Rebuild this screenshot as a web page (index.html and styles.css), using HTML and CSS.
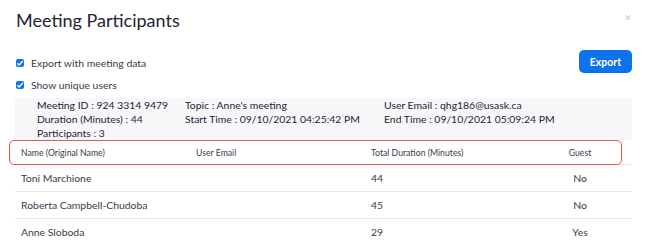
FILE: index.html
```html
<!DOCTYPE html>
<html>
<head>
<meta charset="utf-8">
<link rel="stylesheet" href="styles.css">
</head>
<body>
<div class="dialog">
  <div class="titlebar">
    <h1 class="title">Meeting Participants</h1>
    <span class="close">&#x2715;</span>
  </div>
  <div class="options">
    <div class="checks">
      <label class="check"><span class="box"><svg viewBox="0 0 8 8" width="8" height="8"><path d="M1.3 4.2 L3.2 6 L6.8 2" fill="none" stroke="#fff" stroke-width="1.4"/></svg></span>Export with meeting data</label>
      <label class="check"><span class="box"><svg viewBox="0 0 8 8" width="8" height="8"><path d="M1.3 4.2 L3.2 6 L6.8 2" fill="none" stroke="#fff" stroke-width="1.4"/></svg></span>Show unique users</label>
    </div>
    <button class="export">Export</button>
  </div>
  <div class="info">
    <div class="info-col c1">
      <div>Meeting ID : 924 3314 9479</div>
      <div>Duration (Minutes) : 44</div>
      <div>Participants : 3</div>
    </div>
    <div class="info-col c2">
      <div>Topic : Anne's meeting</div>
      <div>Start Time : 09/10/2021 04:25:42 PM</div>
    </div>
    <div class="info-col c3">
      <div>User Email : qhg186@usask.ca</div>
      <div>End Time : 09/10/2021 05:09:24 PM</div>
    </div>
  </div>
  <div class="table">
    <div class="row head">
      <div class="cell name">Name (Original Name)</div>
      <div class="cell email">User Email</div>
      <div class="cell dur">Total Duration (Minutes)</div>
      <div class="cell guest">Guest</div>
      <div class="highlight"></div>
    </div>
    <div class="row">
      <div class="cell name">Toni Marchione</div>
      <div class="cell email"></div>
      <div class="cell dur">44</div>
      <div class="cell guest">No</div>
    </div>
    <div class="row">
      <div class="cell name">Roberta Campbell-Chudoba</div>
      <div class="cell email"></div>
      <div class="cell dur">45</div>
      <div class="cell guest">No</div>
    </div>
    <div class="row">
      <div class="cell name">Anne Sloboda</div>
      <div class="cell email"></div>
      <div class="cell dur">29</div>
      <div class="cell guest">Yes</div>
    </div>
  </div>
</div>
</body>
</html>
```
FILE: styles.css
```css
html, body {
  margin: 0;
  padding: 0;
  background: #ffffff;
}
body {
  font-family: Lato, "Open Sans", sans-serif;
  color: #232333;
  width: 648px;
  height: 247px;
  overflow: hidden;
}
.dialog {
  padding: 0 16px 0 15px;
}
.titlebar {
  display: flex;
  justify-content: space-between;
  align-items: flex-start;
  height: 44px;
}
.title {
  margin: 9px 0 0 1px;
  font-size: 18px;
  font-weight: 400;
  color: #232333;
  line-height: 22px;
}
.close {
  margin-top: 12px;
  margin-right: 0;
  font-size: 9px;
  color: #c8c8c8;
}
.options {
  display: flex;
  justify-content: space-between;
  align-items: flex-start;
  height: 54px;
}
.checks {
  display: flex;
  flex-direction: column;
  gap: 8px;
  padding-top: 12px;
}
.check {
  display: flex;
  align-items: center;
  font-size: 10.4px;
  color: #3a3a48;
  line-height: 14px;
}
.box {
  width: 8px;
  height: 8px;
  background: #0e72ed;
  border-radius: 2px;
  margin: 0 7px 0 1px;
  display: flex;
  align-items: center;
  justify-content: center;
}
.box svg { display: block; }
.export {
  margin-top: 6px;
  width: 53px;
  height: 23px;
  background: #0e72ed;
  color: #fff;
  border: none;
  border-radius: 5px;
  font-family: Lato, sans-serif;
  font-weight: 700;
  font-size: 10.5px;
  padding: 0;
}
.info {
  display: flex;
  background: #f7f7fa;
  padding: 0 0 0 22px;
  height: 42px;
  font-size: 10.4px;
  line-height: 14px;
  color: #232333;
}
.info-col.c1 { width: 148px; }
.info-col.c2 { width: 199px; }
.table {
  display: flex;
  flex-direction: column;
}
.row {
  display: flex;
  height: 25px;
  align-items: center;
  padding-bottom: 1px;
  border-bottom: 1px solid #e8e8ea;
  font-size: 10.4px;
  color: #3a3a48;
  position: relative;
}
.row:last-child { border-bottom: none; }
.row.head {
  font-size: 8.7px;
  height: 24px;
  padding-bottom: 0;
}
.cell.name { width: 181px; padding-left: 6px; box-sizing: border-box; flex: none; }
.cell.email { width: 175px; flex: none; }
.cell.dur { width: 157px; flex: none; }
.cell.guest { width: 104px; flex: none; text-align: center; }
.highlight {
  position: absolute;
  left: -6px;
  top: 0;
  width: 611px;
  height: 23px;
  border: 1.5px solid #e25555;
  border-radius: 5px;
}
```
